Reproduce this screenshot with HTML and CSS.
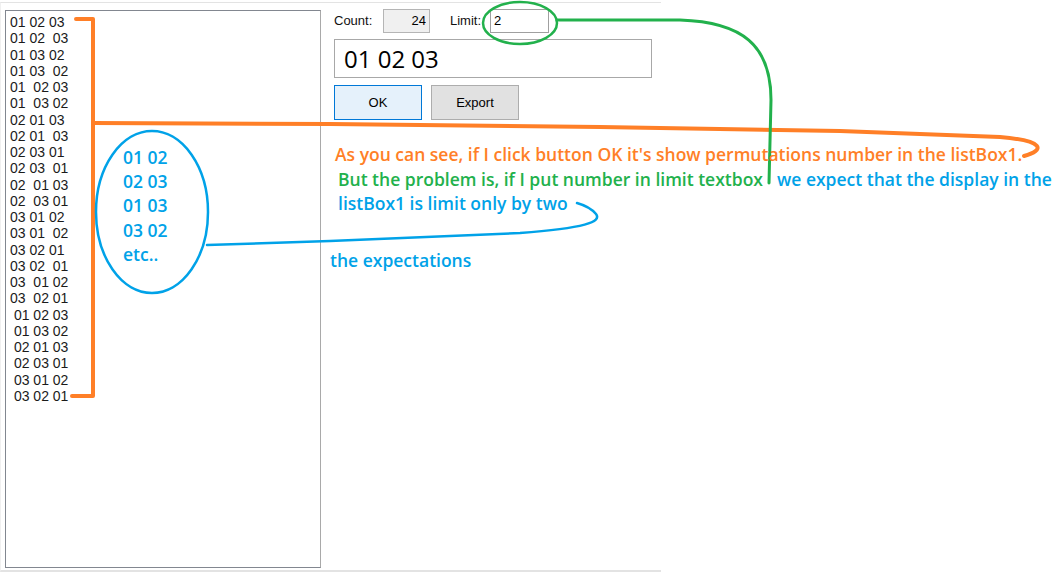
FILE: index.html
```html
<!DOCTYPE html>
<html lang="en">
<head>
  <meta charset="UTF-8" />
  <title>Permutations - listBox1</title>
  <link rel="stylesheet" href="styles.css">
</head>
<body>
  <div class="window">
    <div class="listbox">
      <div class="item">01 02 03</div>
      <div class="item">01 02  03</div>
      <div class="item">01 03 02</div>
      <div class="item">01 03  02</div>
      <div class="item">01  02 03</div>
      <div class="item">01  03 02</div>
      <div class="item">02 01 03</div>
      <div class="item">02 01  03</div>
      <div class="item">02 03 01</div>
      <div class="item">02 03  01</div>
      <div class="item">02  01 03</div>
      <div class="item">02  03 01</div>
      <div class="item">03 01 02</div>
      <div class="item">03 01  02</div>
      <div class="item">03 02 01</div>
      <div class="item">03 02  01</div>
      <div class="item">03  01 02</div>
      <div class="item">03  02 01</div>
      <div class="item"> 01 02 03</div>
      <div class="item"> 01 03 02</div>
      <div class="item"> 02 01 03</div>
      <div class="item"> 02 03 01</div>
      <div class="item"> 03 01 02</div>
      <div class="item"> 03 02 01</div>
    </div>

    <div class="panel">
      <div class="row-top">
        <span class="lbl">Count:</span>
        <input class="txt txt-count" type="text" value="24" readonly>
        <span class="lbl lbl-limit">Limit:</span>
        <input class="txt txt-limit" type="text" value="2">
      </div>
      <input class="txt txt-big" type="text" value="01 02 03">
      <div class="row-btns">
        <button class="btn btn-ok">OK</button>
        <button class="btn">Export</button>
      </div>
    </div>
  </div>

  <!-- notas dibujadas encima -->
  <svg class="marks" width="1063" height="583" viewBox="0 0 1063 583">
    <g fill="none" stroke-linecap="round" stroke-linejoin="round">
      <path stroke="#ff7f27" stroke-width="4" d="M76 19 H93 V396 H72"/>
      <path stroke="#ff7f27" stroke-width="4" d="M93 123 L330 124 L600 127 L840 131 L1000 137 C1045 141, 1045 150, 1024 156"/>
      <ellipse stroke="#22b14c" stroke-width="2.5" cx="520" cy="23" rx="37" ry="21"/>
      <path stroke="#22b14c" stroke-width="3" d="M557 20 H680 C742 22, 771 45, 771 100 L769 183"/>
      <ellipse stroke="#00a2e8" stroke-width="2.5" cx="152" cy="212" rx="56" ry="81"/>
      <path stroke="#00a2e8" stroke-width="2.5" d="M207 245 L330 241 L520 233 C585 228, 602 222, 596 214 C591 208, 584 205, 577 203"/>
    </g>
  </svg>

  <div class="note note-list">
    <div>01 02</div>
    <div>02 03</div>
    <div>01 03</div>
    <div>03 02</div>
    <div>etc..</div>
  </div>
  <p class="note orange l1">As you can see, if I click button OK it's show permutations number in the listBox1.</p>
  <p class="note green l2">But the problem is, if I put number in limit textbox</p>
  <p class="note blue l2b">we expect that the display in the</p>
  <p class="note blue l3">listBox1 is limit only by two</p>
  <p class="note blue l4">the expectations</p>
</body>
</html>
```

FILE: styles.css
```css
html, body {
  margin: 0;
  padding: 0;
  background: #fff;
  font-family: "Liberation Sans", Arial, sans-serif;
  overflow: hidden;
}

body {
  position: relative;
  width: 1063px;
  height: 583px;
}

/* ventana del form */
.window {
  display: flex;
  width: 661px;
  height: 570px;
  margin-top: 2px;
  border-top: 1px solid #e3e3e3;
  border-left: 1px solid #f0f0f0;
  border-bottom: 2px solid #e3e3e3;
  box-sizing: border-box;
  padding: 7px 0 6px 4px;
}

.listbox {
  width: 316px;
  height: 558px;
  box-sizing: border-box;
  border: 1px solid #828790;
  border-right-color: #a9a9a9;
  padding: 3px 0 0 4px;
  background: #fff;
}

.item {
  font-size: 14px;
  line-height: 16.25px;
  height: 16.25px;
  white-space: pre;
  color: #1b1b1b;
}

.panel {
  display: flex;
  flex-direction: column;
  padding: 0 0 0 13px;
  margin-top: -2px;
}

.row-top {
  display: flex;
  align-items: center;
  height: 25px;
}

.lbl {
  font-size: 13px;
  color: #111;
  width: 49px;
}

.lbl-limit {
  margin-left: 20px;
  width: 40px;
}

.txt {
  box-sizing: border-box;
  border: 1px solid #a0a0a0;
  border-radius: 0;
  font-family: "Liberation Sans", Arial, sans-serif;
  font-size: 13px;
  padding: 2px 3px;
  outline: none;
  color: #000;
}

.txt-count {
  width: 47px;
  height: 24px;
  background: #f0f0f0;
  text-align: right;
  border-color: #b5b5b5;
}

.txt-limit {
  width: 59px;
  height: 24px;
  background: #fff;
}

.txt-big {
  width: 318px;
  height: 39px;
  margin-top: 6px;
  font-family: "Open Sans", sans-serif;
  font-size: 24px;
  padding: 0 0 0 9px;
  border-color: #a8a8a8;
}

.row-btns {
  display: flex;
  gap: 9px;
  margin-top: 7px;
}

.btn {
  width: 88px;
  height: 35px;
  font-family: "Liberation Sans", Arial, sans-serif;
  font-size: 13px;
  color: #000;
  background: #e1e1e1;
  border: 1px solid #adadad;
  border-radius: 0;
  padding: 0;
}

.btn-ok {
  background: #e5f1fb;
  border-color: #0078d7;
}

/* anotaciones */
.marks {
  position: absolute;
  top: 0;
  left: 0;
  pointer-events: none;
}

.note {
  position: absolute;
  margin: 0;
  font-family: "Open Sans", sans-serif;
  font-weight: 600;
  font-size: 17.5px;
  line-height: 20px;
  white-space: nowrap;
}

.orange { color: #ff7f27; }
.green { color: #22b14c; }
.blue { color: #00a2e8; }

.note-list {
  left: 123px;
  top: 145px;
  color: #00a2e8;
  line-height: 24.2px;
}

.l1 { left: 335px; top: 144px; }
.l2 { left: 338px; top: 169px; }
.l2b { left: 777px; top: 169px; }
.l3 { left: 338px; top: 193px; }
.l4 { left: 330px; top: 250px; }
```
